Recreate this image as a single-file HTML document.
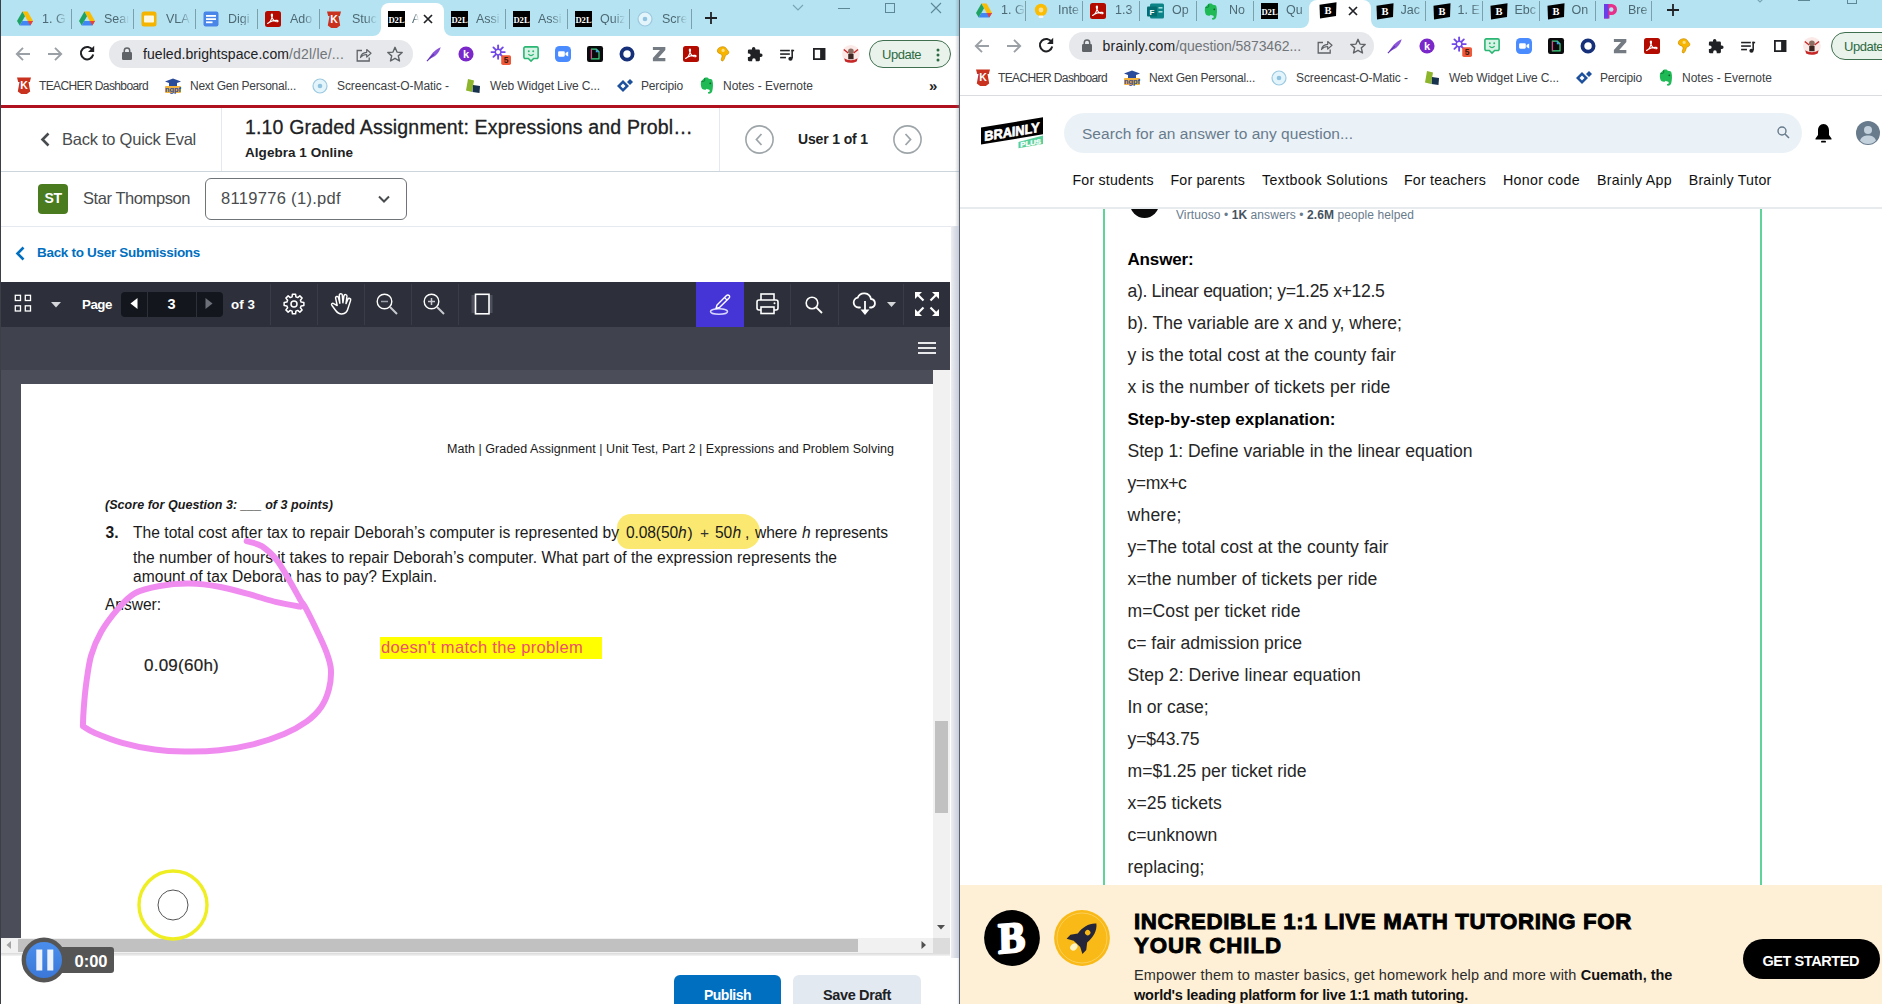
<!DOCTYPE html>
<html><head><meta charset="utf-8"><title>screen</title>
<style>
*{box-sizing:border-box;margin:0;padding:0}
html,body{width:1882px;height:1004px;overflow:hidden;background:#fff;font-family:"Liberation Sans",sans-serif;color:#202124}
.a{position:absolute}
.t{position:absolute;white-space:nowrap;line-height:1}
#L{position:absolute;left:0;top:0;width:960px;height:1004px;overflow:hidden;background:#fff}
#R{position:absolute;left:960px;top:0;width:922px;height:1004px;overflow:hidden;background:#fff}
svg{position:absolute;overflow:visible}
</style></head><body>
<div id="L">
<div class="a" style="left:0px;top:0px;width:960px;height:36px;background:#b5e3f2;"></div><svg style="left:17px;top:11px;" width="16" height="15" viewBox="0 0 16 15"><polygon points="5.4,0.5 10.6,0.5 16,10 10.8,10" fill="#fbbc04"/><polygon points="5.4,0.5 0,10 2.7,14.5 8,5.2" fill="#1ea362"/><polygon points="2.7,14.5 13.3,14.5 16,10 5.3,10" fill="#4285f4"/><polygon points="10.8,10 16,10 13.3,14.5" fill="#ea4335"/></svg><span class="t" style="left:42px;top:12.9px;font-size:12.5px;color:#4d6973;width:25px;overflow:hidden;-webkit-mask-image:linear-gradient(90deg,#000 55%,transparent 100%);">1. G</span><svg style="left:79px;top:11px;" width="16" height="15" viewBox="0 0 16 15"><polygon points="5.4,0.5 10.6,0.5 16,10 10.8,10" fill="#fbbc04"/><polygon points="5.4,0.5 0,10 2.7,14.5 8,5.2" fill="#1ea362"/><polygon points="2.7,14.5 13.3,14.5 16,10 5.3,10" fill="#4285f4"/><polygon points="10.8,10 16,10 13.3,14.5" fill="#ea4335"/></svg><span class="t" style="left:104px;top:12.9px;font-size:12.5px;color:#4d6973;width:25px;overflow:hidden;-webkit-mask-image:linear-gradient(90deg,#000 55%,transparent 100%);">Sear</span><svg style="left:141px;top:11px;" width="16" height="16" viewBox="0 0 16 16"><rect x="0.5" y="0.5" width="15" height="15" rx="2.5" fill="#f4b400"/><rect x="3" y="4.5" width="10" height="7" rx="0.8" fill="#fff8e1"/></svg><span class="t" style="left:166px;top:12.9px;font-size:12.5px;color:#4d6973;width:25px;overflow:hidden;-webkit-mask-image:linear-gradient(90deg,#000 55%,transparent 100%);">VLA</span><svg style="left:203px;top:11px;" width="16" height="16" viewBox="0 0 16 16"><rect x="0.5" y="0.5" width="15" height="15" rx="2.2" fill="#4a86e8"/><rect x="3" y="4" width="10" height="1.8" fill="#fff"/><rect x="3" y="7.2" width="10" height="1.8" fill="#fff"/><rect x="3" y="10.4" width="6.5" height="1.8" fill="#fff"/></svg><span class="t" style="left:228px;top:12.9px;font-size:12.5px;color:#4d6973;width:25px;overflow:hidden;-webkit-mask-image:linear-gradient(90deg,#000 55%,transparent 100%);">Digi</span><svg style="left:265px;top:11px;" width="16" height="16" viewBox="0 0 16 16"><rect x="0" y="0" width="16" height="16" rx="2.5" fill="#b30b00"/><path d="M3 12.2c1.6-.6 3.3-3.6 4.2-6.4.5-1.6.4-2.8-.3-2.8-.8 0-.8 1.6.1 3.4 1.2 2.5 3.6 4.3 5.2 4.3 1.2 0 1.2-1.2-.3-1.3-2.3-.1-6 .9-8.2 2.2-1.3.8-1.4 1.1-.7.6z" fill="none" stroke="#fff" stroke-width="1.1"/></svg><span class="t" style="left:290px;top:12.9px;font-size:12.5px;color:#4d6973;width:25px;overflow:hidden;-webkit-mask-image:linear-gradient(90deg,#000 55%,transparent 100%);">Ado</span><svg style="left:327px;top:11px;" width="14" height="17" viewBox="0 0 14 17"><polygon points="0,0.500 14,0.500 12.800,5 11.500,5 13.200,14.500 9.800,17 4.200,17 0.800,14.500 2.500,5 1.200,5" fill="#c8321f"/><text x="7" y="12.3" font-size="10.5" font-weight="700" fill="#fff" text-anchor="middle" font-family="Liberation Sans,sans-serif">K</text></svg><span class="t" style="left:352px;top:12.9px;font-size:12.5px;color:#4d6973;width:25px;overflow:hidden;-webkit-mask-image:linear-gradient(90deg,#000 55%,transparent 100%);">Stuc</span><svg style="left:451px;top:11px;" width="17" height="16" viewBox="0 0 17 16"><rect width="17" height="16" fill="#000"/><text x="8.5" y="11.6" font-size="8.6" font-weight="700" fill="#fff" text-anchor="middle" font-family="Liberation Serif,serif">D2L</text></svg><span class="t" style="left:476px;top:12.9px;font-size:12.5px;color:#4d6973;width:25px;overflow:hidden;-webkit-mask-image:linear-gradient(90deg,#000 55%,transparent 100%);">Assi</span><svg style="left:513px;top:11px;" width="17" height="16" viewBox="0 0 17 16"><rect width="17" height="16" fill="#000"/><text x="8.5" y="11.6" font-size="8.6" font-weight="700" fill="#fff" text-anchor="middle" font-family="Liberation Serif,serif">D2L</text></svg><span class="t" style="left:538px;top:12.9px;font-size:12.5px;color:#4d6973;width:25px;overflow:hidden;-webkit-mask-image:linear-gradient(90deg,#000 55%,transparent 100%);">Assi</span><svg style="left:575px;top:11px;" width="17" height="16" viewBox="0 0 17 16"><rect width="17" height="16" fill="#000"/><text x="8.5" y="11.6" font-size="8.6" font-weight="700" fill="#fff" text-anchor="middle" font-family="Liberation Serif,serif">D2L</text></svg><span class="t" style="left:600px;top:12.9px;font-size:12.5px;color:#4d6973;width:25px;overflow:hidden;-webkit-mask-image:linear-gradient(90deg,#000 55%,transparent 100%);">Quiz</span><svg style="left:637px;top:11px;" width="16" height="16" viewBox="0 0 16 16"><circle cx="8" cy="8" r="7" fill="#e3f4fb" stroke="#9cc9e0" stroke-width="1.2"/><circle cx="8" cy="8" r="2.3" fill="#8fc3df"/></svg><span class="t" style="left:662px;top:12.9px;font-size:12.5px;color:#4d6973;width:25px;overflow:hidden;-webkit-mask-image:linear-gradient(90deg,#000 55%,transparent 100%);">Scre</span><div class="a" style="left:71px;top:9px;width:1px;height:20px;background:#7aa0ac;"></div><div class="a" style="left:133px;top:9px;width:1px;height:20px;background:#7aa0ac;"></div><div class="a" style="left:195px;top:9px;width:1px;height:20px;background:#7aa0ac;"></div><div class="a" style="left:257px;top:9px;width:1px;height:20px;background:#7aa0ac;"></div><div class="a" style="left:319px;top:9px;width:1px;height:20px;background:#7aa0ac;"></div><div class="a" style="left:505px;top:9px;width:1px;height:20px;background:#7aa0ac;"></div><div class="a" style="left:567px;top:9px;width:1px;height:20px;background:#7aa0ac;"></div><div class="a" style="left:629px;top:9px;width:1px;height:20px;background:#7aa0ac;"></div><div class="a" style="left:691px;top:9px;width:1px;height:20px;background:#7aa0ac;"></div><div class="a" style="left:381px;top:2.500px;width:63px;height:34px;background:#fff;border-radius:8px 8px 0 0"></div><svg style="left:373px;top:28px;" width="8" height="8" viewBox="0 0 8 8"><path d="M0 8A8 8 0 0 0 8 0V8z" fill="#fff"/></svg><svg style="left:444px;top:28px;" width="8" height="8" viewBox="0 0 8 8"><path d="M8 8A8 8 0 0 1 0 0V8z" fill="#fff"/></svg><svg style="left:388px;top:11px;" width="17" height="16" viewBox="0 0 17 16"><rect width="17" height="16" fill="#000"/><text x="8.5" y="11.6" font-size="8.6" font-weight="700" fill="#fff" text-anchor="middle" font-family="Liberation Serif,serif">D2L</text></svg><span class="t" style="left:412px;top:12.9px;font-size:12.5px;color:#4d6973;width:7px;overflow:hidden;-webkit-mask-image:linear-gradient(90deg,#000 20%,transparent 100%);">A</span><svg style="left:423px;top:14px;" width="10" height="10" viewBox="0 0 10 10"><path d="M1 1l8 8M9 1l-8 8" stroke="#202124" stroke-width="1.700"/></svg><svg style="left:704px;top:11px;" width="14" height="14" viewBox="0 0 14 14"><path d="M7 1v12M1 7h12" stroke="#202124" stroke-width="1.800"/></svg><svg style="left:792px;top:4px;" width="12" height="8" viewBox="0 0 12 8"><path d="M1 1l5 5 5-5" fill="none" stroke="#7aa5b3" stroke-width="1.200"/></svg><div class="a" style="left:838px;top:8px;width:12px;height:1px;background:#5d8795;"></div><div class="a" style="left:885px;top:3px;width:10px;height:10px;border:1px solid #5d8795"></div><svg style="left:930px;top:2px;" width="12" height="12" viewBox="0 0 12 12"><path d="M1 1l10 10M11 1 1 11" stroke="#5d8795" stroke-width="1.100"/></svg><div class="a" style="left:0px;top:36px;width:960px;height:68px;background:#fff;"></div><svg style="left:15px;top:46px;" width="16" height="16" viewBox="0 0 16 16"><path d="M15 8H2M8 1.800 1.800 8 8 14.200" fill="none" stroke="#9aa0a6" stroke-width="1.900"/></svg><svg style="left:47px;top:46px;" width="16" height="16" viewBox="0 0 16 16"><path d="M1 8h13M8 1.800 14.200 8 8 14.200" fill="none" stroke="#9aa0a6" stroke-width="1.900"/></svg><svg style="left:79px;top:45px;" width="16" height="16" viewBox="0 0 16 16"><path d="M13.600 5.200A6.200 6.200 0 1 0 14.200 9.500" fill="none" stroke="#202124" stroke-width="2"/><polygon points="15.200,0.800 15.200,7 9,7" fill="#202124"/></svg><div class="a" style="left:109px;top:40px;width:304px;height:28px;border-radius:14px;background:#e7e8eb"></div><svg style="left:122px;top:47px;" width="10" height="13" viewBox="0 0 10 13"><rect x="0" y="5" width="10" height="8" rx="1.200" fill="#5f6368"/><path d="M2.300 5.500V3.600a2.700 2.700 0 0 1 5.400 0V5.500" fill="none" stroke="#5f6368" stroke-width="1.500"/></svg><span class="t" style="left:143px;top:47.1px;font-size:14px;color:#202124;letter-spacing:0.056px;">fueled.brightspace.com</span><span class="t" style="left:289px;top:47.1px;font-size:14px;color:#70757a;letter-spacing:0.189px;">/d2l/le/...</span><svg style="left:356px;top:47px;" width="16" height="15" viewBox="0 0 16 15"><path d="M6 3.500H1.200V14h12V10.500" fill="none" stroke="#5f6368" stroke-width="1.300"/><path d="M4.500 10.500c.6-3.300 2.700-5 6.200-5.200V2.500L15 6.300l-4.300 3.800V7.500c-2.700 0-4.600.9-6.200 3z" fill="none" stroke="#5f6368" stroke-width="1.200" stroke-linejoin="round"/></svg><svg style="left:387px;top:46px;" width="16" height="16" viewBox="0 0 16 16"><polygon points="8,1.300 10,6.100 15.200,6.500 11.300,9.900 12.500,15 8,12.300 3.500,15 4.700,9.900 0.800,6.500 6,6.100" fill="none" stroke="#5f6368" stroke-width="1.400" stroke-linejoin="round"/></svg><svg style="left:425.99px;top:45.99px;" width="16.02" height="16.02" viewBox="0 0 18 18"><path d="M1.500 16.500C5 10 10 4 16.500 1.500 15 8 10 12.500 4 14.500z" fill="#8a55d8"/><path d="M1 17 9 9" stroke="#5b2fb0" stroke-width="1.200"/></svg><svg style="left:457.99px;top:45.99px;" width="16.02" height="16.02" viewBox="0 0 18 18"><circle cx="9" cy="9" r="8.500" fill="#7a28c9"/><text x="9" y="13.300" font-size="12.500" font-weight="700" fill="#fff" text-anchor="middle" font-family="Liberation Sans,sans-serif">k</text></svg><svg style="left:491.32px;top:45.32px;" width="21.36" height="21.36" viewBox="0 0 24 24"><line x1="8" y1="8" x2="15.50" y2="8.00" stroke="#7048e8" stroke-width="2.100" stroke-linecap="round"/><line x1="8" y1="8" x2="13.30" y2="13.30" stroke="#7048e8" stroke-width="2.100" stroke-linecap="round"/><line x1="8" y1="8" x2="8.00" y2="15.50" stroke="#7048e8" stroke-width="2.100" stroke-linecap="round"/><line x1="8" y1="8" x2="2.70" y2="13.30" stroke="#7048e8" stroke-width="2.100" stroke-linecap="round"/><line x1="8" y1="8" x2="0.50" y2="8.00" stroke="#7048e8" stroke-width="2.100" stroke-linecap="round"/><line x1="8" y1="8" x2="2.70" y2="2.70" stroke="#7048e8" stroke-width="2.100" stroke-linecap="round"/><line x1="8" y1="8" x2="8.00" y2="0.50" stroke="#7048e8" stroke-width="2.100" stroke-linecap="round"/><line x1="8" y1="8" x2="13.30" y2="2.70" stroke="#7048e8" stroke-width="2.100" stroke-linecap="round"/><circle cx="8" cy="8" r="3.200" fill="#fff" stroke="#7048e8" stroke-width="1.600"/><rect x="11.500" y="11.500" width="11" height="11" rx="2" fill="#f0583a"/><text x="17" y="20.600" font-size="9.500" font-weight="700" fill="#3a1a10" text-anchor="middle" font-family="Liberation Sans,sans-serif">5</text></svg><svg style="left:522.99px;top:45.99px;" width="16.02" height="16.02" viewBox="0 0 18 18"><path d="M2.500 1h13a1.500 1.500 0 0 1 1.500 1.500v10a1.500 1.500 0 0 1-1.500 1.500H12l-3 3-3-3H2.500A1.500 1.500 0 0 1 1 12.500v-10A1.500 1.500 0 0 1 2.500 1z" fill="#d7f3e6" stroke="#2bb673" stroke-width="1.800"/><circle cx="6.500" cy="6" r="1.100" fill="#2bb673"/><circle cx="11.500" cy="6" r="1.100" fill="#2bb673"/><path d="M6 9.200c1.700 1.700 4.300 1.700 6 0" fill="none" stroke="#2bb673" stroke-width="1.300"/></svg><svg style="left:554.99px;top:45.99px;" width="16.02" height="16.02" viewBox="0 0 18 18"><rect width="18" height="18" rx="5" fill="#4a8cff"/><rect x="3.500" y="6" width="7.500" height="6" rx="1.300" fill="#fff"/><polygon points="11.800,8 14.800,6.200 14.800,11.800 11.800,10" fill="#fff"/></svg><svg style="left:586.99px;top:45.99px;" width="16.02" height="16.02" viewBox="0 0 18 18"><rect width="18" height="18" rx="2.500" fill="#0b0b0d"/><path d="M5 3.500h5.500L13.500 6.500V14.500H5z" fill="none" stroke="#3ddc84" stroke-width="1.300"/><path d="M5 14.500V3.500" stroke="#e83e8c" stroke-width="1.300"/><path d="M10.500 3.500v3h3" fill="none" stroke="#4aa3ff" stroke-width="1.200"/></svg><svg style="left:618.99px;top:45.99px;" width="16.02" height="16.02" viewBox="0 0 18 18"><circle cx="9" cy="9" r="6.300" fill="none" stroke="#16307a" stroke-width="4.200"/></svg><svg style="left:651.88px;top:45.99px;" width="14.24" height="16.02" viewBox="0 0 16 18"><polygon points="1,1 15,1 15,4.500 7,13.500 15,13.500 15,17 1,17 1,13.500 9,4.500 1,4.500" fill="#757b82"/></svg><svg style="left:682.99px;top:45.99px;" width="16.02" height="16.02" viewBox="0 0 16 16"><rect x="0" y="0" width="16" height="16" rx="2.5" fill="#b30b00"/><path d="M3 12.2c1.6-.6 3.3-3.6 4.2-6.4.5-1.6.4-2.8-.3-2.8-.8 0-.8 1.6.1 3.4 1.2 2.5 3.6 4.3 5.2 4.3 1.2 0 1.2-1.2-.3-1.3-2.3-.1-6 .9-8.2 2.2-1.3.8-1.4 1.1-.7.6z" fill="none" stroke="#fff" stroke-width="1.1"/></svg><svg style="left:715.88px;top:45.99px;" width="14.24" height="16.02" viewBox="0 0 16 18"><path d="M6 1c3-1 6 1 6.500 3.500 1.500.5 2.500 2.500 1.500 4-1 1.500-3 1.200-3.500 2.500-.5 1.500-1 4-2.500 5.500-1.500 1-2.500-.5-2-2 .5-2 1.500-3 .5-4.500C5 8 1.500 8.500 1.500 5.500 1.500 3 3.500 1.500 6 1z" fill="#f7b500" stroke="#c98a00" stroke-width=".8"/><circle cx="8" cy="5" r="1.800" fill="#fbe08a"/></svg><svg style="left:746.99px;top:45.99px;" width="16.02" height="16.02" viewBox="0 0 18 18"><path d="M7.500 1a1.900 1.900 0 0 1 1.900 1.900V4h3.800A1.300 1.300 0 0 1 14.500 5.300V8.500h1.100a1.900 1.900 0 0 1 0 3.800H14.500v3.400a1.300 1.300 0 0 1-1.300 1.300H9.800v-1.100a2 2 0 0 0-4 0V17H2.300A1.300 1.300 0 0 1 1 15.700V12.300h1.100a2 2 0 0 0 0-4H1V5.300A1.300 1.300 0 0 1 2.300 4h3.300V2.900A1.900 1.900 0 0 1 7.500 1z" fill="#202124"/></svg><svg style="left:779.88px;top:48.77px;" width="14.24" height="12.46" viewBox="0 0 18 16"><rect x="0" y="1" width="12.500" height="2" fill="#202124"/><rect x="0" y="5.500" width="12.500" height="2" fill="#202124"/><rect x="0" y="10" width="7.500" height="2" fill="#202124"/><rect x="14.500" y="1" width="2" height="11" fill="#202124"/><rect x="14.500" y="1" width="3.500" height="2" fill="#202124"/><circle cx="13.300" cy="12.500" r="2.700" fill="#202124"/></svg><svg style="left:812.77px;top:47.77px;" width="12.46" height="12.46" viewBox="0 0 14 14"><rect x="1" y="1" width="12" height="11.500" fill="#fff" stroke="#202124" stroke-width="2"/><rect x="8" y="1" width="5" height="11.500" fill="#202124"/></svg><svg style="left:842.10px;top:45.10px;" width="17.80" height="17.80" viewBox="0 0 20 20"><circle cx="10" cy="10" r="10" fill="#fbe9e7"/><path d="M2 5 7 9M18 5 13 9" stroke="#c62828" stroke-width="1.600"/><circle cx="10" cy="7" r="3.200" fill="#8d6e63"/><rect x="7" y="10" width="6" height="6" fill="#3e2723"/><path d="M2.500 15c4 3 11 3 15 0l-1 3.500c-4 2-9 2-13 0z" fill="#c62828"/></svg><div class="a" style="left:869px;top:40px;width:82px;height:28px;border:1.300px solid #3f6f4e;border-radius:14.0px;background:#e9f3eb"></div><span class="t" style="left:882px;top:48.0px;font-size:13px;color:#2d6a43;letter-spacing:-0.487px;">Update</span><svg style="left:936px;top:48px;" width="4" height="14" viewBox="0 0 4 14"><circle cx="2" cy="2" r="1.500" fill="#2d6a43"/><circle cx="2" cy="7" r="1.500" fill="#2d6a43"/><circle cx="2" cy="12" r="1.500" fill="#2d6a43"/></svg><svg style="left:17px;top:77.0px;" width="14" height="17" viewBox="0 0 14 17"><polygon points="0,0.500 14,0.500 12.800,5 11.500,5 13.200,14.500 9.800,17 4.200,17 0.800,14.500 2.500,5 1.200,5" fill="#c8321f"/><text x="7" y="12.3" font-size="10.5" font-weight="700" fill="#fff" text-anchor="middle" font-family="Liberation Sans,sans-serif">K</text></svg><span class="t" style="left:39px;top:79.8px;font-size:12px;color:#3c4043;letter-spacing:-0.611px;">TEACHER Dashboard</span><svg style="left:164px;top:77.5px;" width="18" height="16" viewBox="0 0 18 16"><rect x="1" y="8" width="16" height="7" rx="1" fill="#f3b33d"/><text x="9" y="14" font-size="7.500" font-weight="700" fill="#2b4c9b" text-anchor="middle" font-family="Liberation Sans,sans-serif">ngpf</text><polygon points="9,0.500 17,3.500 9,6.500 1,3.500" fill="#2b4c9b"/><rect x="5" y="5" width="8" height="3" fill="#2b4c9b"/></svg><span class="t" style="left:190px;top:79.8px;font-size:12px;color:#3c4043;letter-spacing:-0.270px;">Next Gen Personal...</span><svg style="left:312px;top:77.5px;" width="16" height="16" viewBox="0 0 16 16"><circle cx="8" cy="8" r="7" fill="#e3f4fb" stroke="#9cc9e0" stroke-width="1.2"/><circle cx="8" cy="8" r="2.3" fill="#8fc3df"/></svg><span class="t" style="left:337px;top:79.8px;font-size:12px;color:#3c4043;letter-spacing:-0.068px;">Screencast-O-Matic -</span><svg style="left:465px;top:78.5px;" width="18" height="15" viewBox="0 0 18 15"><polygon points="3,0 9,1.500 7,13 1,11.500" fill="#8cb52b"/><polygon points="8,6 15,7 14.500,14 7.500,13" fill="#17324d"/></svg><span class="t" style="left:490px;top:79.8px;font-size:12px;color:#3c4043;letter-spacing:-0.125px;">Web Widget Live C...</span><svg style="left:616px;top:78.5px;" width="18" height="14" viewBox="0 0 18 14"><polygon points="7,1 13,7 7,13 1,7" fill="#1c4f9c"/><polygon points="7,4.500 9.500,7 7,9.500 4.500,7" fill="#fff"/><polygon points="14,0 17,3 14,6 11,3" fill="#1c4f9c"/></svg><span class="t" style="left:641px;top:79.8px;font-size:12px;color:#3c4043;letter-spacing:-0.170px;">Percipio</span><svg style="left:700px;top:76.5px;" width="15" height="17" viewBox="0 0 15 17"><path d="M4.6 0.8 1.2 4.3c-.6 1.7-.5 4.6.4 6.8.5 1.2 1.6 1.6 3.2 1.7 1 .1 1.5-.3 1.6-1.1.7.5 1.6.6 2.3.7.9.1 1.1.6 1 1.6-.1.9-.6 1.1-1.7 1l.1 1.6c2.3.3 3.5-.5 4.1-2.4.8-2.8 1.2-7.5.2-10.7-.3-1-1.2-1.5-3.600-1.700C8 0.700 7.200 0.300 4.600 0.800z" fill="#1fb956"/><path d="M4.700 1.200v2.100c0 .7-.4 1.100-1.100 1.100H1.500" fill="none" stroke="#0d7a35" stroke-width=".9"/><circle cx="10.3" cy="6.300" r=".9" fill="#0d5e2a"/></svg><span class="t" style="left:723px;top:79.8px;font-size:12px;color:#3c4043;">Notes - Evernote</span><span class="t" style="left:929px;top:78.3px;font-size:15px;color:#202124;font-weight:700;">»</span><div class="a" style="left:0px;top:104.6px;width:960px;height:4.3px;background:#b0111e;"></div><div class="a" style="left:0px;top:108px;width:959px;height:63px;background:#fff;"></div><div class="a" style="left:221px;top:108px;width:1px;height:63px;background:#e3e9f1;"></div><div class="a" style="left:719px;top:108px;width:1px;height:63px;background:#e3e9f1;"></div><div class="a" style="left:0px;top:171px;width:959px;height:1px;background:#cdd5dc;"></div><svg style="left:40px;top:132px;" width="10" height="15" viewBox="0 0 10 15"><path d="M8.500 1.500 2.500 7.500l6 6" fill="none" stroke="#494c4e" stroke-width="2.600"/></svg><span class="t" style="left:62px;top:131.4px;font-size:16.5px;color:#494c4e;letter-spacing:-0.249px;">Back to Quick Eval</span><span class="t" style="left:245px;top:118.1px;font-size:19.5px;color:#202122;-webkit-text-stroke:0.300px #202122;letter-spacing:0.172px;">1.10 Graded Assignment: Expressions and Probl…</span><span class="t" style="left:245px;top:146.1px;font-size:13.5px;color:#202122;font-weight:700;letter-spacing:0.045px;">Algebra 1 Online</span><svg style="left:744.5px;top:124.8px;" width="29" height="29" viewBox="0 0 29 29"><circle cx="14.500" cy="14.500" r="13.600" fill="#fff" stroke="#9ea5a9" stroke-width="1.600"/><path d="M16.500 9 11.500 14.500l5 5.500" fill="none" stroke="#9ea5a9" stroke-width="1.800"/></svg><svg style="left:892.5px;top:124.8px;" width="29" height="29" viewBox="0 0 29 29"><circle cx="14.500" cy="14.500" r="13.600" fill="#fff" stroke="#9ea5a9" stroke-width="1.600"/><path d="M12.500 9l5 5.500-5 5.500" fill="none" stroke="#9ea5a9" stroke-width="1.800"/></svg><span class="t" style="left:798px;top:131.9px;font-size:14px;color:#202122;font-weight:700;letter-spacing:-0.145px;">User 1 of 1</span><div class="a" style="left:38px;top:184px;width:30px;height:30px;background:#4a7c1f;border-radius:4px"></div><span class="t" style="left:44.5px;top:191.4px;font-size:14px;color:#fff;font-weight:700;letter-spacing:-0.445px;">ST</span><span class="t" style="left:83px;top:190.0px;font-size:16.5px;color:#494c4e;letter-spacing:-0.424px;">Star Thompson</span><div class="a" style="left:205px;top:178px;width:202px;height:41.5px;background:#fff;border:1.300px solid #6e7477;border-radius:6px"></div><span class="t" style="left:221px;top:190.0px;font-size:16.5px;color:#494c4e;letter-spacing:0.314px;">8119776 (1).pdf</span><svg style="left:377px;top:194px;" width="14" height="10" viewBox="0 0 14 10"><path d="M2 2.500 7 7.500l5-5" fill="none" stroke="#494c4e" stroke-width="2"/></svg><div class="a" style="left:0px;top:226px;width:959px;height:1px;background:#e6eaf0;"></div><svg style="left:15px;top:246px;" width="11" height="15" viewBox="0 0 11 15"><path d="M8.500 1.500 2.500 7.500l6 6" fill="none" stroke="#006fbf" stroke-width="2.600"/></svg><span class="t" style="left:37px;top:246.2px;font-size:13.5px;color:#006fbf;font-weight:700;letter-spacing:-0.305px;">Back to User Submissions</span><div class="a" style="left:0px;top:282px;width:950px;height:45px;background:#2d303b;"></div><div class="a" style="left:0px;top:327px;width:950px;height:43px;background:#40434e;"></div><svg style="left:14px;top:294px;" width="18" height="19" viewBox="0 0 18 19"><rect x="1.3" y="1.3" width="5.200" height="5.200" fill="none" stroke="#fff" stroke-width="1.300"/><rect x="1.3" y="11.8" width="5.200" height="5.200" fill="none" stroke="#fff" stroke-width="1.300"/><rect x="11.3" y="1.3" width="5.200" height="5.200" fill="none" stroke="#fff" stroke-width="1.300"/><rect x="11.3" y="11.8" width="5.200" height="5.200" fill="none" stroke="#fff" stroke-width="1.300"/></svg><svg style="left:51px;top:302px;" width="10" height="6" viewBox="0 0 10 6"><polygon points="0,0 10,0 5,5.500" fill="#d5d6da"/></svg><span class="t" style="left:82px;top:298.2px;font-size:13.3px;color:#fff;font-weight:700;letter-spacing:-0.449px;">Page</span><div class="a" style="left:121px;top:291.5px;width:102px;height:25.5px;background:#14161d;border-radius:4px"></div><div class="a" style="left:147px;top:291.5px;width:1px;height:25.5px;background:#2d303b;"></div><div class="a" style="left:196px;top:291.5px;width:1px;height:25.5px;background:#2d303b;"></div><svg style="left:130px;top:298px;" width="8" height="12" viewBox="0 0 8 12"><polygon points="7.500,0 7.500,11 0.500,5.500" fill="#fff"/></svg><svg style="left:205px;top:298px;" width="8" height="12" viewBox="0 0 8 12"><polygon points="0.500,0 0.500,11 7.500,5.500" fill="#6d7078"/></svg><span class="t" style="left:167.5px;top:297.2px;font-size:14.5px;color:#fff;font-weight:700;">3</span><span class="t" style="left:231px;top:298.2px;font-size:13.3px;color:#fff;font-weight:700;letter-spacing:0.090px;">of 3</span><div class="a" style="left:270px;top:284px;width:1px;height:41px;background:#3a3d48;"></div><div class="a" style="left:317px;top:284px;width:1px;height:41px;background:#3a3d48;"></div><div class="a" style="left:364px;top:284px;width:1px;height:41px;background:#3a3d48;"></div><div class="a" style="left:411px;top:284px;width:1px;height:41px;background:#3a3d48;"></div><div class="a" style="left:458px;top:284px;width:1px;height:41px;background:#3a3d48;"></div><div class="a" style="left:790px;top:284px;width:1px;height:41px;background:#3a3d48;"></div><div class="a" style="left:838px;top:284px;width:1px;height:41px;background:#3a3d48;"></div><div class="a" style="left:903px;top:284px;width:1px;height:41px;background:#3a3d48;"></div><svg style="left:283px;top:293px;" width="22" height="22" viewBox="0 0 22 22"><g transform="translate(11,11)"><path d="M-1.90 -7.15 L-1.59 -9.87 L1.59 -9.87 L1.90 -7.15 L3.71 -6.40 L5.85 -8.11 L8.11 -5.85 L6.40 -3.71 L7.15 -1.90 L9.87 -1.59 L9.87 1.59 L7.15 1.90 L6.40 3.71 L8.11 5.85 L5.85 8.11 L3.71 6.40 L1.90 7.15 L1.59 9.87 L-1.59 9.87 L-1.90 7.15 L-3.71 6.40 L-5.85 8.11 L-8.11 5.85 L-6.40 3.71 L-7.15 1.90 L-9.87 1.59 L-9.87 -1.59 L-7.15 -1.90 L-6.40 -3.71 L-8.11 -5.85 L-5.85 -8.11 L-3.71 -6.40Z" fill="none" stroke="#fff" stroke-width="1.500" stroke-linejoin="round"/><circle r="3" fill="none" stroke="#fff" stroke-width="1.500"/></g></svg><svg style="left:330px;top:292px;" width="23" height="24" viewBox="0 0 23 24"><path d="M7.200 13.500 5.600 6.200a1.450 1.450 0 0 1 2.850-.6L9.800 11.200 9.300 3.300a1.500 1.500 0 0 1 3-.2L12.900 10.800 14 3.700a1.500 1.500 0 0 1 2.950.45L16 11.600 17.900 7.300a1.450 1.450 0 0 1 2.700 1.100L18.300 15.500C17.400 19.500 15.500 22 11.800 22 8.700 22 7 20.500 5.300 18L1.800 13.200c-.9-1.300.7-2.700 1.900-1.600z" fill="none" stroke="#fff" stroke-width="1.450" stroke-linejoin="round" stroke-linecap="round"/></svg><svg style="left:376px;top:293px;" width="22" height="22" viewBox="0 0 22 22"><circle cx="8.500" cy="8.500" r="7.300" fill="none" stroke="#fff" stroke-width="1.400"/><path d="M14 14l7 7" stroke="#c9cacf" stroke-width="2"/><path d="M5 8.500h7" stroke="#9da0a8" stroke-width="1.500"/></svg><svg style="left:423px;top:293px;" width="22" height="22" viewBox="0 0 22 22"><circle cx="8.500" cy="8.500" r="7.300" fill="none" stroke="#fff" stroke-width="1.400"/><path d="M14 14l7 7" stroke="#c9cacf" stroke-width="2"/><path d="M5 8.500h7M8.500 5v7" stroke="#c9cacf" stroke-width="1.500"/></svg><svg style="left:470px;top:293px;" width="24" height="22" viewBox="0 0 24 22"><rect x="1.500" y="2" width="21" height="18" fill="#4d505c"/><rect x="5.500" y="1.300" width="13.500" height="19.500" fill="#2d303b" stroke="#fff" stroke-width="1.600"/></svg><div class="a" style="left:696px;top:282px;width:48px;height:45px;background:#4535d6;"></div><svg style="left:708px;top:294px;" width="24" height="22" viewBox="0 0 24 22"><ellipse cx="11" cy="17.500" rx="8.500" ry="2.800" fill="none" stroke="#d9d6ff" stroke-width="1.500"/><path d="M8 14.500l1-3.500L18.500 1.500a1.800 1.800 0 0 1 2.600 2.600L11.500 13.500z" fill="#4535d6" stroke="#fff" stroke-width="1.400" stroke-linejoin="round"/><path d="M16.500 3.500l2.600 2.600" stroke="#fff" stroke-width="1.200"/></svg><svg style="left:756px;top:293px;" width="23" height="22" viewBox="0 0 23 22"><rect x="5" y="1" width="13" height="7" fill="none" stroke="#fff" stroke-width="1.600"/><rect x="1" y="7" width="21" height="10" rx="2" fill="#2d303b" stroke="#fff" stroke-width="1.600"/><rect x="5" y="14" width="13" height="6.500" fill="#2d303b" stroke="#fff" stroke-width="1.600"/><circle cx="18.500" cy="10.300" r="1" fill="#fff"/></svg><svg style="left:805px;top:296px;" width="18" height="18" viewBox="0 0 18 18"><circle cx="7" cy="7" r="5.800" fill="none" stroke="#fff" stroke-width="1.600"/><path d="M11.300 11.300 17 17" stroke="#fff" stroke-width="1.800"/></svg><svg style="left:852px;top:292px;" width="26" height="24" viewBox="0 0 26 24"><path d="M8 15.500H6.500a5 5 0 0 1-.8-9.900 7 7 0 0 1 13.300 1.400 4.300 4.300 0 0 1 .5 8.500H18" fill="none" stroke="#fff" stroke-width="1.800" stroke-linecap="round"/><path d="M13 9v12" stroke="#fff" stroke-width="1.800"/><polygon points="8.500,17.500 17.500,17.500 13,23" fill="#fff"/></svg><svg style="left:887px;top:302px;" width="10" height="6" viewBox="0 0 10 6"><polygon points="0,0 9,0 4.500,5" fill="#d5d6da"/></svg><svg style="left:915px;top:292px;" width="24" height="24" viewBox="0 0 24 24"><g transform="translate(12,12) scale(1,1)"><polygon points="5,12 12,12 12,5" fill="#fff"/><path d="M3.500 3.500 10 10" stroke="#fff" stroke-width="2.200"/></g><g transform="translate(12,12) scale(-1,1)"><polygon points="5,12 12,12 12,5" fill="#fff"/><path d="M3.500 3.500 10 10" stroke="#fff" stroke-width="2.200"/></g><g transform="translate(12,12) scale(1,-1)"><polygon points="5,12 12,12 12,5" fill="#fff"/><path d="M3.500 3.500 10 10" stroke="#fff" stroke-width="2.200"/></g><g transform="translate(12,12) scale(-1,-1)"><polygon points="5,12 12,12 12,5" fill="#fff"/><path d="M3.500 3.500 10 10" stroke="#fff" stroke-width="2.200"/></g></svg><div class="a" style="left:918px;top:342px;width:18px;height:2.2px;background:#e8e8ea;"></div><div class="a" style="left:918px;top:347px;width:18px;height:2.2px;background:#e8e8ea;"></div><div class="a" style="left:918px;top:352px;width:18px;height:2.2px;background:#e8e8ea;"></div><div class="a" style="left:0px;top:370px;width:933px;height:568px;background:#4b4e59;"></div><div class="a" style="left:21px;top:384px;width:912px;height:554px;background:#fff;"></div><div class="a" style="left:933px;top:370px;width:17px;height:568px;background:#f1f1f1;"></div><div class="a" style="left:935px;top:721px;width:13px;height:92px;background:#c1c1c1;"></div><svg style="left:937px;top:925px;" width="9" height="6" viewBox="0 0 9 6"><polygon points="0,0 8,0 4,4.500" fill="#505050"/></svg><div class="a" style="left:0px;top:938px;width:933px;height:15px;background:#f1f1f1;"></div><div class="a" style="left:18px;top:939px;width:840px;height:13px;background:#c1c1c1;"></div><svg style="left:6px;top:941px;" width="6" height="9" viewBox="0 0 6 9"><polygon points="5,0 5,8 0.500,4" fill="#a3a3a3"/></svg><svg style="left:921px;top:941px;" width="6" height="9" viewBox="0 0 6 9"><polygon points="0.500,0 0.500,8 5,4" fill="#505050"/></svg><div class="a" style="left:933px;top:938px;width:17px;height:15px;background:#dcdcdc;"></div><div class="a" style="left:0px;top:953px;width:950px;height:3px;background:linear-gradient(#d8d8d8,#f4f4f4)"></div><div class="a" style="left:952px;top:585px;width:1px;height:18px;background:#6b6b6b;"></div><div class="a" style="left:955px;top:585px;width:1px;height:18px;background:#6b6b6b;"></div><span class="t" style="left:447px;top:442.9px;font-size:12.5px;color:#1a1a1a;letter-spacing:0.042px;">Math | Graded Assignment | Unit Test, Part 2 | Expressions and Problem Solving</span><span class="t" style="left:105px;top:499.2px;font-size:12.5px;color:#1a1a1a;font-weight:700;font-style:italic;letter-spacing:0.040px;">(Score for Question 3: ___ of 3 points)</span><span class="t" style="left:105.5px;top:524.8px;font-size:15.6px;color:#1a1a1a;font-weight:700;letter-spacing:-0.008px;">3.</span><div class="a" style="left:617px;top:514px;width:143px;height:35px;background:#fbe870;border-radius:14px 18px 16px 12px"></div><span class="t" style="left:133px;top:524.8px;font-size:15.6px;color:#1a1a1a;letter-spacing:0.025px;">The total cost after tax to repair Deborah’s computer is represented by</span><span class="t" style="left:626px;top:524.8px;font-size:15.6px;color:#1a1a1a;letter-spacing:-0.127px;">0.08(50</span><span class="t" style="left:678px;top:524.8px;font-size:15.6px;color:#1a1a1a;font-style:italic;letter-spacing:-0.688px;">h</span><span class="t" style="left:687.5px;top:524.9px;font-size:15.5px;color:#1a1a1a;letter-spacing:-0.172px;">)</span><span class="t" style="left:700px;top:524.9px;font-size:15.5px;color:#333;letter-spacing:0.438px;">+</span><span class="t" style="left:715px;top:524.8px;font-size:15.6px;color:#1a1a1a;letter-spacing:-0.180px;">50</span><span class="t" style="left:732.5px;top:524.8px;font-size:15.6px;color:#1a1a1a;font-style:italic;letter-spacing:-0.688px;">h</span><span class="t" style="left:745px;top:524.8px;font-size:15.6px;color:#1a1a1a;letter-spacing:-0.344px;">,</span><span class="t" style="left:755px;top:524.8px;font-size:15.6px;color:#1a1a1a;letter-spacing:-0.097px;">where</span><span class="t" style="left:802px;top:524.8px;font-size:15.6px;color:#1a1a1a;font-style:italic;letter-spacing:-0.688px;">h</span><span class="t" style="left:815px;top:524.8px;font-size:15.6px;color:#1a1a1a;letter-spacing:-0.069px;">represents</span><span class="t" style="left:133px;top:550.3px;font-size:15.6px;color:#1a1a1a;letter-spacing:0.022px;">the number of hours it takes to repair Deborah’s computer. What part of the expression represents the</span><span class="t" style="left:133px;top:569.1px;font-size:15.6px;color:#1a1a1a;letter-spacing:0.014px;">amount of tax Deborah has to pay? Explain.</span><span class="t" style="left:105px;top:596.8px;font-size:15.6px;color:#1a1a1a;letter-spacing:-0.049px;">Answer:</span><span class="t" style="left:144px;top:656.6px;font-size:17px;color:#222;-webkit-text-stroke:0.200px #222;letter-spacing:0.247px;">0.09(60h)</span><div class="a" style="left:380px;top:637px;width:222px;height:21.5px;background:#ffff00;"></div><span class="t" style="left:381px;top:638.5px;font-size:16.5px;color:#ef4f6b;letter-spacing:0.323px;">doesn&#x27;t match the problem</span><svg style="left:0;top:0" width="960" height="1004" viewBox="0 0 960 1004"><path d="M246.7 541.2 C249.2 542.0 256.7 543.0 261.7 546.1 C266.6 549.3 272.0 554.2 276.6 559.8 C281.2 565.4 285.1 573.1 289.0 579.8 C293.0 586.4 297.6 595.1 300.2 599.7 C302.9 604.2 302.5 602.2 305.2 607.1 C307.9 612.1 312.9 622.1 316.4 629.5 C320.0 637.0 324.0 645.3 326.4 652.0 C328.8 658.6 330.5 663.2 330.9 669.4 C331.3 675.6 330.5 683.1 328.9 689.3 C327.3 695.5 325.1 701.3 321.4 706.7 C317.7 712.1 312.7 717.1 306.5 721.7 C300.2 726.2 292.8 730.4 284.1 734.1 C275.4 737.8 265.0 741.4 254.2 744.1 C243.4 746.8 231.0 749.0 219.3 750.3 C207.7 751.5 195.3 751.7 184.5 751.5 C173.7 751.4 165.0 751.0 154.6 749.5 C144.2 748.1 132.2 745.6 122.2 742.8 C112.3 740.0 101.4 735.6 94.9 732.9 C88.3 730.1 84.9 727.3 82.9 726.1 L82.9 726.1 C83.0 723.3 83.1 716.2 83.7 709.2 C84.2 702.2 84.9 693.2 86.1 684.3 C87.4 675.4 88.6 664.4 91.1 655.7 C93.6 647.0 96.7 639.7 101.1 632.0 C105.4 624.4 111.7 616.1 117.3 609.6 C122.9 603.2 127.6 597.4 134.7 593.4 C141.7 589.5 150.5 587.6 159.6 586.0 C168.7 584.3 179.5 583.4 189.5 583.5 C199.4 583.6 209.4 584.9 219.3 586.7 C229.3 588.5 239.7 591.6 249.2 594.2 C258.8 596.8 268.1 600.1 276.6 602.2 C285.1 604.2 296.3 605.9 300.2 606.6" fill="none" stroke="#f08cf0" stroke-width="6" stroke-linecap="round" stroke-linejoin="round"/></svg><svg style="left:136px;top:868px;" width="74" height="74" viewBox="0 0 74 74"><circle cx="37" cy="37" r="34" fill="none" stroke="#eeee22" stroke-width="3.400"/><circle cx="37" cy="37" r="15" fill="none" stroke="#555" stroke-width="1"/></svg><div class="a" style="left:0px;top:956px;width:950px;height:48px;background:#fff;"></div><div class="a" style="left:674px;top:975px;width:107px;height:40px;background:#006fbf;border-radius:6px"></div><span class="t" style="left:704px;top:988.1px;font-size:14px;color:#fff;font-weight:700;letter-spacing:-0.509px;">Publish</span><div class="a" style="left:793px;top:975px;width:128px;height:40px;background:#e3e9f1;border-radius:6px"></div><span class="t" style="left:823px;top:987.7px;font-size:14.5px;color:#202122;font-weight:700;letter-spacing:-0.373px;">Save Draft</span><div class="a" style="left:44px;top:947px;width:70px;height:26px;background:#555;border-radius:0 3px 3px 0"></div><span class="t" style="left:74.5px;top:952.5px;font-size:16.5px;color:#fff;font-weight:700;letter-spacing:-0.008px;">0:00</span><svg style="left:21px;top:936.6px;" width="46" height="46" viewBox="0 0 46 46"><defs><linearGradient id="pg" x1="0" y1="0" x2="0" y2="1"><stop offset="0" stop-color="#4b90ee"/><stop offset="1" stop-color="#3a76d6"/></linearGradient></defs><circle cx="23" cy="23" r="20.200" fill="url(#pg)" stroke="#555" stroke-width="4.400"/><rect x="15.300" y="12.500" width="6" height="21" fill="#eef3fb"/><rect x="26.300" y="12.500" width="6" height="21" fill="#eef3fb"/></svg><div class="a" style="left:950.5px;top:226px;width:9px;height:732px;background:linear-gradient(90deg,#eceef2,#c3c8d6)"></div><div class="a" style="left:957px;top:958px;width:2.5px;height:46px;background:linear-gradient(90deg,#fff,#d5d8e0)"></div><div class="a" style="left:955px;top:0px;width:4px;height:226px;background:linear-gradient(90deg,rgba(110,120,130,0),rgba(110,120,130,0.350))"></div><div class="a" style="left:958.8px;top:0px;width:1.3px;height:1004px;background:#5a6270;"></div><div class="a" style="left:0px;top:0px;width:1.2px;height:1004px;background:#3c3f46;"></div>
</div>
<div id="R">
<div class="a" style="left:0px;top:0px;width:922px;height:28px;background:#b5e3f2;"></div><svg style="left:16px;top:3px;" width="16" height="15" viewBox="0 0 16 15"><polygon points="5.4,0.5 10.6,0.5 16,10 10.8,10" fill="#fbbc04"/><polygon points="5.4,0.5 0,10 2.7,14.5 8,5.2" fill="#1ea362"/><polygon points="2.7,14.5 13.3,14.5 16,10 5.3,10" fill="#4285f4"/><polygon points="10.8,10 16,10 13.3,14.5" fill="#ea4335"/></svg><span class="t" style="left:41px;top:4.4px;font-size:12.5px;color:#4d6973;width:25px;overflow:hidden;-webkit-mask-image:linear-gradient(90deg,#000 55%,transparent 100%);">1. G</span><svg style="left:73px;top:3px;" width="16" height="16" viewBox="0 0 16 16"><circle cx="8" cy="7" r="6.2" fill="#fbbc04"/><rect x="5.6" y="12.5" width="4.8" height="2.5" rx="1" fill="#f1f3f4"/><circle cx="8" cy="7" r="2.4" fill="#fde293"/></svg><span class="t" style="left:98px;top:4.4px;font-size:12.5px;color:#4d6973;width:25px;overflow:hidden;-webkit-mask-image:linear-gradient(90deg,#000 55%,transparent 100%);">Inte</span><svg style="left:130px;top:3px;" width="16" height="16" viewBox="0 0 16 16"><rect x="0" y="0" width="16" height="16" rx="2.5" fill="#b30b00"/><path d="M3 12.2c1.6-.6 3.3-3.6 4.2-6.4.5-1.6.4-2.8-.3-2.8-.8 0-.8 1.6.1 3.4 1.2 2.5 3.6 4.3 5.2 4.3 1.2 0 1.2-1.2-.3-1.3-2.3-.1-6 .9-8.2 2.2-1.3.8-1.4 1.1-.7.6z" fill="none" stroke="#fff" stroke-width="1.1"/></svg><span class="t" style="left:155px;top:4.4px;font-size:12.5px;color:#4d6973;width:25px;overflow:hidden;-webkit-mask-image:linear-gradient(90deg,#000 55%,transparent 100%);">1.3</span><svg style="left:187px;top:3px;" width="17" height="16" viewBox="0 0 17 16"><rect x="3" y="0.5" width="14" height="15" rx="1.5" fill="#0b8387"/><rect x="0" y="3.5" width="10" height="10" rx="1" fill="#036c70"/><text x="5" y="11.6" font-size="8" font-weight="700" fill="#fff" text-anchor="middle" font-family="Liberation Sans,sans-serif">F</text><rect x="11.5" y="4" width="4" height="1.6" fill="#9fdcdc"/><rect x="11.5" y="8" width="4" height="1.6" fill="#9fdcdc"/></svg><span class="t" style="left:212px;top:4.4px;font-size:12.5px;color:#4d6973;width:25px;overflow:hidden;-webkit-mask-image:linear-gradient(90deg,#000 55%,transparent 100%);">Op</span><svg style="left:244px;top:3px;" width="15" height="17" viewBox="0 0 15 17"><path d="M4.6 0.8 1.2 4.3c-.6 1.7-.5 4.6.4 6.8.5 1.2 1.6 1.6 3.2 1.7 1 .1 1.5-.3 1.6-1.1.7.5 1.6.6 2.3.7.9.1 1.1.6 1 1.6-.1.9-.6 1.1-1.7 1l.1 1.6c2.3.3 3.5-.5 4.1-2.4.8-2.8 1.2-7.5.2-10.7-.3-1-1.2-1.5-3.600-1.700C8 0.700 7.200 0.300 4.600 0.800z" fill="#1fb956"/><path d="M4.700 1.200v2.100c0 .7-.4 1.100-1.100 1.100H1.500" fill="none" stroke="#0d7a35" stroke-width=".9"/><circle cx="10.3" cy="6.300" r=".9" fill="#0d5e2a"/></svg><span class="t" style="left:269px;top:4.4px;font-size:12.5px;color:#4d6973;width:25px;overflow:hidden;-webkit-mask-image:linear-gradient(90deg,#000 55%,transparent 100%);">No</span><svg style="left:301px;top:3px;" width="17" height="16" viewBox="0 0 17 16"><rect width="17" height="16" fill="#000"/><text x="8.5" y="11.6" font-size="8.6" font-weight="700" fill="#fff" text-anchor="middle" font-family="Liberation Serif,serif">D2L</text></svg><span class="t" style="left:326px;top:4.4px;font-size:12.5px;color:#4d6973;width:25px;overflow:hidden;-webkit-mask-image:linear-gradient(90deg,#000 55%,transparent 100%);">Qu</span><svg style="left:415.5px;top:3px;" width="18" height="17" viewBox="0 0 18 17"><polygon points="0.5,2.800 17.500,0.300 17,14 1,16.600" fill="#000"/><text x="9" y="12.400" font-size="10.500" font-weight="700" fill="#fff" text-anchor="middle" font-family="Liberation Serif,serif">B</text></svg><span class="t" style="left:440.5px;top:4.4px;font-size:12.5px;color:#4d6973;width:25px;overflow:hidden;-webkit-mask-image:linear-gradient(90deg,#000 55%,transparent 100%);">Jac</span><svg style="left:472.5px;top:3px;" width="18" height="17" viewBox="0 0 18 17"><polygon points="0.5,2.800 17.500,0.300 17,14 1,16.600" fill="#000"/><text x="9" y="12.400" font-size="10.500" font-weight="700" fill="#fff" text-anchor="middle" font-family="Liberation Serif,serif">B</text></svg><span class="t" style="left:497.5px;top:4.4px;font-size:12.5px;color:#4d6973;width:25px;overflow:hidden;-webkit-mask-image:linear-gradient(90deg,#000 55%,transparent 100%);">1. E</span><svg style="left:529.5px;top:3px;" width="18" height="17" viewBox="0 0 18 17"><polygon points="0.5,2.800 17.500,0.300 17,14 1,16.600" fill="#000"/><text x="9" y="12.400" font-size="10.500" font-weight="700" fill="#fff" text-anchor="middle" font-family="Liberation Serif,serif">B</text></svg><span class="t" style="left:554.5px;top:4.4px;font-size:12.5px;color:#4d6973;width:25px;overflow:hidden;-webkit-mask-image:linear-gradient(90deg,#000 55%,transparent 100%);">Ebc</span><svg style="left:586.5px;top:3px;" width="18" height="17" viewBox="0 0 18 17"><polygon points="0.5,2.800 17.500,0.300 17,14 1,16.600" fill="#000"/><text x="9" y="12.400" font-size="10.500" font-weight="700" fill="#fff" text-anchor="middle" font-family="Liberation Serif,serif">B</text></svg><span class="t" style="left:611.5px;top:4.4px;font-size:12.5px;color:#4d6973;width:25px;overflow:hidden;-webkit-mask-image:linear-gradient(90deg,#000 55%,transparent 100%);">On</span><svg style="left:643px;top:3px;" width="15" height="16" viewBox="0 0 15 16"><path d="M1 1h7.500a5.500 5.500 0 0 1 0 11H6.500V15.500L1 15.500z" fill="#e8308a"/><path d="M1 1h4.500v14.500H1z" fill="#6a3de8"/><circle cx="8.300" cy="6.500" r="2.200" fill="#b5e3f2"/></svg><span class="t" style="left:668px;top:4.4px;font-size:12.5px;color:#4d6973;width:25px;overflow:hidden;-webkit-mask-image:linear-gradient(90deg,#000 55%,transparent 100%);">Bre</span><div class="a" style="left:65px;top:1px;width:1px;height:20px;background:#7aa0ac;"></div><div class="a" style="left:122px;top:1px;width:1px;height:20px;background:#7aa0ac;"></div><div class="a" style="left:179px;top:1px;width:1px;height:20px;background:#7aa0ac;"></div><div class="a" style="left:236px;top:1px;width:1px;height:20px;background:#7aa0ac;"></div><div class="a" style="left:293px;top:1px;width:1px;height:20px;background:#7aa0ac;"></div><div class="a" style="left:464.5px;top:1px;width:1px;height:20px;background:#7aa0ac;"></div><div class="a" style="left:521.5px;top:1px;width:1px;height:20px;background:#7aa0ac;"></div><div class="a" style="left:578.5px;top:1px;width:1px;height:20px;background:#7aa0ac;"></div><div class="a" style="left:635px;top:1px;width:1px;height:20px;background:#7aa0ac;"></div><div class="a" style="left:691px;top:1px;width:1px;height:20px;background:#7aa0ac;"></div><div class="a" style="left:349px;top:0;width:62px;height:28px;background:#fff;border-radius:8px 8px 0 0"></div><svg style="left:341px;top:20px;" width="8" height="8" viewBox="0 0 8 8"><path d="M0 8A8 8 0 0 0 8 0V8z" fill="#fff"/></svg><svg style="left:411px;top:20px;" width="8" height="8" viewBox="0 0 8 8"><path d="M8 8A8 8 0 0 1 0 0V8z" fill="#fff"/></svg><svg style="left:359px;top:2px;" width="18" height="17" viewBox="0 0 18 17"><polygon points="0.5,2.800 17.500,0.300 17,14 1,16.600" fill="#000"/><text x="9" y="12.400" font-size="10.500" font-weight="700" fill="#fff" text-anchor="middle" font-family="Liberation Serif,serif">B</text></svg><svg style="left:388px;top:6px;" width="10" height="10" viewBox="0 0 10 10"><path d="M1 1l8 8M9 1l-8 8" stroke="#202124" stroke-width="1.700"/></svg><svg style="left:706px;top:3px;" width="14" height="14" viewBox="0 0 14 14"><path d="M7 1v12M1 7h12" stroke="#202124" stroke-width="1.800"/></svg><svg style="left:794px;top:-4px;" width="12" height="8" viewBox="0 0 12 8"><path d="M1 1l5 5 5-5" fill="none" stroke="#7aa5b3" stroke-width="1.200"/></svg><div class="a" style="left:838px;top:0px;width:12px;height:1px;background:#5d8795;"></div><div class="a" style="left:887px;top:-6px;width:10px;height:10px;border:1px solid #5d8795"></div><svg style="left:14px;top:38px;" width="16" height="16" viewBox="0 0 16 16"><path d="M15 8H2M8 1.800 1.800 8 8 14.200" fill="none" stroke="#9aa0a6" stroke-width="1.900"/></svg><svg style="left:46px;top:38px;" width="16" height="16" viewBox="0 0 16 16"><path d="M1 8h13M8 1.800 14.200 8 8 14.200" fill="none" stroke="#9aa0a6" stroke-width="1.900"/></svg><svg style="left:78px;top:37px;" width="16" height="16" viewBox="0 0 16 16"><path d="M13.600 5.200A6.200 6.200 0 1 0 14.200 9.500" fill="none" stroke="#202124" stroke-width="2"/><polygon points="15.200,0.800 15.200,7 9,7" fill="#202124"/></svg><div class="a" style="left:109px;top:32px;width:305px;height:27.500px;border-radius:14px;background:#e7e8eb"></div><svg style="left:122px;top:39px;" width="10" height="13" viewBox="0 0 10 13"><rect x="0" y="5" width="10" height="8" rx="1.200" fill="#5f6368"/><path d="M2.300 5.500V3.600a2.700 2.700 0 0 1 5.400 0V5.500" fill="none" stroke="#5f6368" stroke-width="1.500"/></svg><span class="t" style="left:142.5px;top:39.3px;font-size:14px;color:#202124;letter-spacing:0.223px;">brainly.com</span><span class="t" style="left:215.5px;top:39.3px;font-size:14px;color:#70757a;letter-spacing:-0.070px;">/question/5873462...</span><svg style="left:357px;top:39px;" width="16" height="15" viewBox="0 0 16 15"><path d="M6 3.500H1.200V14h12V10.500" fill="none" stroke="#5f6368" stroke-width="1.300"/><path d="M4.500 10.500c.6-3.300 2.700-5 6.200-5.200V2.500L15 6.300l-4.300 3.800V7.500c-2.700 0-4.600.9-6.200 3z" fill="none" stroke="#5f6368" stroke-width="1.200" stroke-linejoin="round"/></svg><svg style="left:390px;top:38px;" width="16" height="16" viewBox="0 0 16 16"><polygon points="8,1.300 10,6.100 15.200,6.500 11.300,9.900 12.500,15 8,12.300 3.500,15 4.700,9.900 0.800,6.500 6,6.100" fill="none" stroke="#5f6368" stroke-width="1.400" stroke-linejoin="round"/></svg><svg style="left:426.99px;top:37.99px;" width="16.02" height="16.02" viewBox="0 0 18 18"><path d="M1.500 16.500C5 10 10 4 16.500 1.500 15 8 10 12.500 4 14.500z" fill="#8a55d8"/><path d="M1 17 9 9" stroke="#5b2fb0" stroke-width="1.200"/></svg><svg style="left:458.99px;top:37.99px;" width="16.02" height="16.02" viewBox="0 0 18 18"><circle cx="9" cy="9" r="8.500" fill="#7a28c9"/><text x="9" y="13.300" font-size="12.500" font-weight="700" fill="#fff" text-anchor="middle" font-family="Liberation Sans,sans-serif">k</text></svg><svg style="left:492.32px;top:37.32px;" width="21.36" height="21.36" viewBox="0 0 24 24"><line x1="8" y1="8" x2="15.50" y2="8.00" stroke="#7048e8" stroke-width="2.100" stroke-linecap="round"/><line x1="8" y1="8" x2="13.30" y2="13.30" stroke="#7048e8" stroke-width="2.100" stroke-linecap="round"/><line x1="8" y1="8" x2="8.00" y2="15.50" stroke="#7048e8" stroke-width="2.100" stroke-linecap="round"/><line x1="8" y1="8" x2="2.70" y2="13.30" stroke="#7048e8" stroke-width="2.100" stroke-linecap="round"/><line x1="8" y1="8" x2="0.50" y2="8.00" stroke="#7048e8" stroke-width="2.100" stroke-linecap="round"/><line x1="8" y1="8" x2="2.70" y2="2.70" stroke="#7048e8" stroke-width="2.100" stroke-linecap="round"/><line x1="8" y1="8" x2="8.00" y2="0.50" stroke="#7048e8" stroke-width="2.100" stroke-linecap="round"/><line x1="8" y1="8" x2="13.30" y2="2.70" stroke="#7048e8" stroke-width="2.100" stroke-linecap="round"/><circle cx="8" cy="8" r="3.200" fill="#fff" stroke="#7048e8" stroke-width="1.600"/><rect x="11.500" y="11.500" width="11" height="11" rx="2" fill="#f0583a"/><text x="17" y="20.600" font-size="9.500" font-weight="700" fill="#3a1a10" text-anchor="middle" font-family="Liberation Sans,sans-serif">5</text></svg><svg style="left:523.99px;top:37.99px;" width="16.02" height="16.02" viewBox="0 0 18 18"><path d="M2.500 1h13a1.500 1.500 0 0 1 1.500 1.500v10a1.500 1.500 0 0 1-1.500 1.500H12l-3 3-3-3H2.500A1.500 1.500 0 0 1 1 12.500v-10A1.500 1.500 0 0 1 2.500 1z" fill="#d7f3e6" stroke="#2bb673" stroke-width="1.800"/><circle cx="6.500" cy="6" r="1.100" fill="#2bb673"/><circle cx="11.500" cy="6" r="1.100" fill="#2bb673"/><path d="M6 9.200c1.700 1.700 4.300 1.700 6 0" fill="none" stroke="#2bb673" stroke-width="1.300"/></svg><svg style="left:555.99px;top:37.99px;" width="16.02" height="16.02" viewBox="0 0 18 18"><rect width="18" height="18" rx="5" fill="#4a8cff"/><rect x="3.500" y="6" width="7.500" height="6" rx="1.300" fill="#fff"/><polygon points="11.800,8 14.800,6.200 14.800,11.800 11.800,10" fill="#fff"/></svg><svg style="left:587.99px;top:37.99px;" width="16.02" height="16.02" viewBox="0 0 18 18"><rect width="18" height="18" rx="2.500" fill="#0b0b0d"/><path d="M5 3.500h5.500L13.500 6.500V14.500H5z" fill="none" stroke="#3ddc84" stroke-width="1.300"/><path d="M5 14.500V3.500" stroke="#e83e8c" stroke-width="1.300"/><path d="M10.500 3.500v3h3" fill="none" stroke="#4aa3ff" stroke-width="1.200"/></svg><svg style="left:619.99px;top:37.99px;" width="16.02" height="16.02" viewBox="0 0 18 18"><circle cx="9" cy="9" r="6.300" fill="none" stroke="#16307a" stroke-width="4.200"/></svg><svg style="left:652.88px;top:37.99px;" width="14.24" height="16.02" viewBox="0 0 16 18"><polygon points="1,1 15,1 15,4.500 7,13.500 15,13.500 15,17 1,17 1,13.500 9,4.500 1,4.500" fill="#757b82"/></svg><svg style="left:683.99px;top:37.99px;" width="16.02" height="16.02" viewBox="0 0 16 16"><rect x="0" y="0" width="16" height="16" rx="2.5" fill="#b30b00"/><path d="M3 12.2c1.6-.6 3.3-3.6 4.2-6.4.5-1.6.4-2.8-.3-2.8-.8 0-.8 1.6.1 3.4 1.2 2.5 3.6 4.3 5.2 4.3 1.2 0 1.2-1.2-.3-1.3-2.3-.1-6 .9-8.2 2.2-1.3.8-1.4 1.1-.7.6z" fill="none" stroke="#fff" stroke-width="1.1"/></svg><svg style="left:716.88px;top:37.99px;" width="14.24" height="16.02" viewBox="0 0 16 18"><path d="M6 1c3-1 6 1 6.500 3.500 1.500.5 2.500 2.500 1.500 4-1 1.500-3 1.200-3.500 2.500-.5 1.500-1 4-2.500 5.500-1.500 1-2.500-.5-2-2 .5-2 1.500-3 .5-4.500C5 8 1.500 8.500 1.500 5.500 1.500 3 3.500 1.500 6 1z" fill="#f7b500" stroke="#c98a00" stroke-width=".8"/><circle cx="8" cy="5" r="1.800" fill="#fbe08a"/></svg><svg style="left:747.99px;top:37.99px;" width="16.02" height="16.02" viewBox="0 0 18 18"><path d="M7.500 1a1.900 1.900 0 0 1 1.900 1.900V4h3.800A1.300 1.300 0 0 1 14.500 5.300V8.500h1.100a1.900 1.900 0 0 1 0 3.800H14.500v3.400a1.300 1.300 0 0 1-1.300 1.300H9.800v-1.100a2 2 0 0 0-4 0V17H2.300A1.300 1.300 0 0 1 1 15.700V12.300h1.100a2 2 0 0 0 0-4H1V5.300A1.300 1.300 0 0 1 2.300 4h3.300V2.900A1.900 1.900 0 0 1 7.500 1z" fill="#202124"/></svg><svg style="left:780.88px;top:40.77px;" width="14.24" height="12.46" viewBox="0 0 18 16"><rect x="0" y="1" width="12.500" height="2" fill="#202124"/><rect x="0" y="5.500" width="12.500" height="2" fill="#202124"/><rect x="0" y="10" width="7.500" height="2" fill="#202124"/><rect x="14.500" y="1" width="2" height="11" fill="#202124"/><rect x="14.500" y="1" width="3.500" height="2" fill="#202124"/><circle cx="13.300" cy="12.500" r="2.700" fill="#202124"/></svg><svg style="left:813.77px;top:39.77px;" width="12.46" height="12.46" viewBox="0 0 14 14"><rect x="1" y="1" width="12" height="11.500" fill="#fff" stroke="#202124" stroke-width="2"/><rect x="8" y="1" width="5" height="11.500" fill="#202124"/></svg><svg style="left:843.10px;top:37.10px;" width="17.80" height="17.80" viewBox="0 0 20 20"><circle cx="10" cy="10" r="10" fill="#fbe9e7"/><path d="M2 5 7 9M18 5 13 9" stroke="#c62828" stroke-width="1.600"/><circle cx="10" cy="7" r="3.200" fill="#8d6e63"/><rect x="7" y="10" width="6" height="6" fill="#3e2723"/><path d="M2.500 15c4 3 11 3 15 0l-1 3.500c-4 2-9 2-13 0z" fill="#c62828"/></svg><div class="a" style="left:871px;top:32px;width:82px;height:28px;border:1.300px solid #3f6f4e;border-radius:14.0px;background:#e9f3eb"></div><span class="t" style="left:884px;top:40.2px;font-size:13px;color:#2d6a43;letter-spacing:-0.487px;">Update</span><svg style="left:16px;top:69.0px;" width="14" height="17" viewBox="0 0 14 17"><polygon points="0,0.500 14,0.500 12.800,5 11.500,5 13.200,14.500 9.800,17 4.200,17 0.800,14.500 2.500,5 1.200,5" fill="#c8321f"/><text x="7" y="12.3" font-size="10.5" font-weight="700" fill="#fff" text-anchor="middle" font-family="Liberation Sans,sans-serif">K</text></svg><span class="t" style="left:38px;top:71.8px;font-size:12px;color:#3c4043;letter-spacing:-0.611px;">TEACHER Dashboard</span><svg style="left:163px;top:69.5px;" width="18" height="16" viewBox="0 0 18 16"><rect x="1" y="8" width="16" height="7" rx="1" fill="#f3b33d"/><text x="9" y="14" font-size="7.500" font-weight="700" fill="#2b4c9b" text-anchor="middle" font-family="Liberation Sans,sans-serif">ngpf</text><polygon points="9,0.500 17,3.500 9,6.500 1,3.500" fill="#2b4c9b"/><rect x="5" y="5" width="8" height="3" fill="#2b4c9b"/></svg><span class="t" style="left:189px;top:71.8px;font-size:12px;color:#3c4043;letter-spacing:-0.270px;">Next Gen Personal...</span><svg style="left:311px;top:69.5px;" width="16" height="16" viewBox="0 0 16 16"><circle cx="8" cy="8" r="7" fill="#e3f4fb" stroke="#9cc9e0" stroke-width="1.2"/><circle cx="8" cy="8" r="2.3" fill="#8fc3df"/></svg><span class="t" style="left:336px;top:71.8px;font-size:12px;color:#3c4043;letter-spacing:-0.068px;">Screencast-O-Matic -</span><svg style="left:464px;top:70.5px;" width="18" height="15" viewBox="0 0 18 15"><polygon points="3,0 9,1.500 7,13 1,11.500" fill="#8cb52b"/><polygon points="8,6 15,7 14.500,14 7.500,13" fill="#17324d"/></svg><span class="t" style="left:489px;top:71.8px;font-size:12px;color:#3c4043;letter-spacing:-0.125px;">Web Widget Live C...</span><svg style="left:615px;top:70.5px;" width="18" height="14" viewBox="0 0 18 14"><polygon points="7,1 13,7 7,13 1,7" fill="#1c4f9c"/><polygon points="7,4.500 9.500,7 7,9.500 4.500,7" fill="#fff"/><polygon points="14,0 17,3 14,6 11,3" fill="#1c4f9c"/></svg><span class="t" style="left:640px;top:71.8px;font-size:12px;color:#3c4043;letter-spacing:-0.170px;">Percipio</span><svg style="left:699px;top:68.5px;" width="15" height="17" viewBox="0 0 15 17"><path d="M4.6 0.8 1.2 4.3c-.6 1.7-.5 4.6.4 6.8.5 1.2 1.6 1.6 3.2 1.7 1 .1 1.5-.3 1.6-1.1.7.5 1.6.6 2.3.7.9.1 1.1.6 1 1.6-.1.9-.6 1.1-1.7 1l.1 1.6c2.3.3 3.5-.5 4.1-2.4.8-2.8 1.2-7.5.2-10.7-.3-1-1.2-1.5-3.600-1.700C8 0.700 7.200 0.300 4.600 0.800z" fill="#1fb956"/><path d="M4.700 1.200v2.100c0 .7-.4 1.100-1.100 1.100H1.500" fill="none" stroke="#0d7a35" stroke-width=".9"/><circle cx="10.3" cy="6.300" r=".9" fill="#0d5e2a"/></svg><span class="t" style="left:722px;top:71.8px;font-size:12px;color:#3c4043;">Notes - Evernote</span><div class="a" style="left:0px;top:95px;width:922px;height:1px;background:#dadce0;"></div><div class="a" style="left:20px;top:117px;width:64px;height:32px;"><svg style="left:0;top:0" width="64" height="32" viewBox="0 0 64 32"><polygon points="1,10.500 63,0.300 63,17.300 1,27.500" fill="#000"/><polygon points="38.500,25 63,18.500 63,27 38.500,31.200" fill="#57cf98"/><text transform="translate(4.300,24) rotate(-9.300) skewX(-10)" font-size="13.400" font-weight="700" fill="#fff" stroke="#fff" stroke-width="0.700" font-family="Liberation Sans,sans-serif" textLength="56" lengthAdjust="spacingAndGlyphs">BRAINLY</text><text transform="translate(40.300,30.200) rotate(-9.300) skewX(-10)" font-size="6.800" font-weight="700" fill="#fff" stroke="#fff" stroke-width="0.300" font-family="Liberation Sans,sans-serif" textLength="21" lengthAdjust="spacingAndGlyphs">PLUS</text></svg></div><div class="a" style="left:104px;top:112.500px;width:738px;height:40.500px;border-radius:20.500px;background:#ebf2f7"></div><span class="t" style="left:122px;top:126.1px;font-size:15.5px;color:#687b8c;letter-spacing:0.034px;">Search for an answer to any question...</span><svg style="left:817px;top:126px;" width="13" height="13" viewBox="0 0 13 13"><circle cx="5" cy="5" r="4" fill="none" stroke="#687b8c" stroke-width="1.400"/><path d="M8 8l4 4" stroke="#687b8c" stroke-width="1.600"/></svg><svg style="left:855px;top:123px;" width="17" height="20" viewBox="0 0 17 20"><path d="M8.500 1C5 1 3 4 3 7.500V12L0.500 15.500V16.500H16.500V15.500L14 12V7.500C14 4 12 1 8.500 1z" fill="#000"/><rect x="6" y="17.800" width="5" height="1.800" rx="0.900" fill="#000"/></svg><svg style="left:895.5px;top:120.5px;" width="24" height="24" viewBox="0 0 24 24"><circle cx="12" cy="12" r="12" fill="#687b8c"/><circle cx="12" cy="9" r="4" fill="#c3d1dd"/><path d="M4 19.500c1.500-4 4.500-5 8-5s6.500 1 8 5c-2 2.500-5 3.500-8 3.500s-6-1-8-3.500z" fill="#c3d1dd"/></svg><span class="t" style="left:112.5px;top:172.5px;font-size:14.2px;color:#111;letter-spacing:0.195px;">For students</span><span class="t" style="left:210.5px;top:172.5px;font-size:14.2px;color:#111;letter-spacing:0.178px;">For parents</span><span class="t" style="left:302px;top:172.5px;font-size:14.2px;color:#111;letter-spacing:0.384px;">Textbook Solutions</span><span class="t" style="left:444px;top:172.5px;font-size:14.2px;color:#111;letter-spacing:0.197px;">For teachers</span><span class="t" style="left:543px;top:172.5px;font-size:14.2px;color:#111;letter-spacing:0.364px;">Honor code</span><span class="t" style="left:637px;top:172.5px;font-size:14.2px;color:#111;letter-spacing:0.293px;">Brainly App</span><span class="t" style="left:728.7px;top:172.5px;font-size:14.2px;color:#111;letter-spacing:0.243px;">Brainly Tutor</span><div class="a" style="left:0px;top:207px;width:922px;height:1.5px;background:#e8ebee;"></div><div class="a" style="left:142.5px;top:208.5px;width:2px;height:677px;background:#60d399;"></div><div class="a" style="left:800px;top:208.5px;width:2px;height:677px;background:#60d399;"></div><div class="a" style="left:170px;top:208.500px;width:29px;height:9px;overflow:hidden"><div class="a" style="left:0;top:-20px;width:29px;height:29px;border-radius:50%;background:#0b0b0b"></div></div><span class="t" style="left:216px;top:208.5px;font-size:12px;color:#687b8c;letter-spacing:0.087px;">Virtuoso • <b style="color:#46535f">1K</b> answers • <b style="color:#46535f">2.6M</b> people helped</span><span class="t" style="left:167.5px;top:251.2px;font-size:17px;color:#000;font-weight:700;letter-spacing:-0.154px;">Answer:</span><span class="t" style="left:167.5px;top:282.7px;font-size:17.6px;color:#262626;letter-spacing:-0.324px;">a). Linear equation; y=1.25 x+12.5</span><span class="t" style="left:167.5px;top:314.7px;font-size:17.6px;color:#262626;letter-spacing:-0.018px;">b). The variable are x and y, where;</span><span class="t" style="left:167.5px;top:346.7px;font-size:17.6px;color:#262626;letter-spacing:0.066px;">y is the total cost at the county fair</span><span class="t" style="left:167.5px;top:378.7px;font-size:17.6px;color:#262626;letter-spacing:0.110px;">x is the number of tickets per ride</span><span class="t" style="left:167.5px;top:411.2px;font-size:17px;color:#000;font-weight:700;letter-spacing:0.007px;">Step-by-step explanation:</span><span class="t" style="left:167.5px;top:442.7px;font-size:17.6px;color:#262626;letter-spacing:-0.027px;">Step 1: Define variable in the linear equation</span><span class="t" style="left:167.5px;top:474.7px;font-size:17.6px;color:#262626;letter-spacing:-0.435px;">y=mx+c</span><span class="t" style="left:167.5px;top:506.7px;font-size:17.6px;color:#262626;letter-spacing:0.198px;">where;</span><span class="t" style="left:167.5px;top:538.7px;font-size:17.6px;color:#262626;letter-spacing:0.038px;">y=The total cost at the county fair</span><span class="t" style="left:167.5px;top:570.7px;font-size:17.6px;color:#262626;letter-spacing:0.096px;">x=the number of tickets per ride</span><span class="t" style="left:167.5px;top:602.7px;font-size:17.6px;color:#262626;letter-spacing:0.063px;">m=Cost per ticket ride</span><span class="t" style="left:167.5px;top:634.7px;font-size:17.6px;color:#262626;letter-spacing:-0.045px;">c= fair admission price</span><span class="t" style="left:167.5px;top:666.7px;font-size:17.6px;color:#262626;letter-spacing:0.050px;">Step 2: Derive linear equation</span><span class="t" style="left:167.5px;top:698.7px;font-size:17.6px;color:#262626;letter-spacing:-0.105px;">In or case;</span><span class="t" style="left:167.5px;top:730.7px;font-size:17.6px;color:#262626;letter-spacing:-0.111px;">y=$43.75</span><span class="t" style="left:167.5px;top:762.7px;font-size:17.6px;color:#262626;letter-spacing:-0.020px;">m=$1.25 per ticket ride</span><span class="t" style="left:167.5px;top:794.7px;font-size:17.6px;color:#262626;letter-spacing:0.092px;">x=25 tickets</span><span class="t" style="left:167.5px;top:826.7px;font-size:17.6px;color:#262626;letter-spacing:0.022px;">c=unknown</span><span class="t" style="left:167.5px;top:858.7px;font-size:17.6px;color:#262626;letter-spacing:0.070px;">replacing;</span><div class="a" style="left:0px;top:885px;width:922px;height:119px;background:#fdf0d6;"></div><svg style="left:24px;top:909.7px;" width="56" height="56" viewBox="0 0 56 56"><circle cx="28" cy="28" r="27.900" fill="#000"/><text transform="translate(14.500,43.300) rotate(-5) skewX(-4)" font-size="43" font-weight="700" fill="#fff" font-family="Liberation Serif,serif" stroke="#fff" stroke-width="2.400" stroke-linejoin="round" textLength="27" lengthAdjust="spacingAndGlyphs">B</text></svg><svg style="left:94px;top:909.7px;" width="56" height="56" viewBox="0 0 56 56"><circle cx="28" cy="28" r="27.900" fill="#f9b916"/><circle cx="28" cy="28" r="25" fill="none" stroke="#fbd05a" stroke-width="1"/><g transform="translate(28.500,28) rotate(44)"><path d="M0 -20c5.500 4.500 7.500 12 6.500 20l4.500 6v5.500l-6.500-3.500h-9l-6.500 3.500v-5.500l4.500-6c-1-8 1-15.500 6.500-20z" fill="#26263a"/><circle cx="0" cy="-7.500" r="2.700" fill="#f9b916"/><ellipse cx="0" cy="12.500" rx="3.200" ry="4" fill="#fff3c4"/></g></svg><span class="t" style="left:174px;top:910.6px;font-size:22.3px;color:#000;font-weight:700;-webkit-text-stroke:0.900px #000;letter-spacing:0.625px;">INCREDIBLE 1:1 LIVE MATH TUTORING FOR</span><span class="t" style="left:174px;top:934.6px;font-size:22.3px;color:#000;font-weight:700;-webkit-text-stroke:0.900px #000;letter-spacing:0.925px;">YOUR CHILD</span><span class="t" style="left:174px;top:967.7px;font-size:14.5px;color:#2b2b2b;letter-spacing:0.157px;">Empower them to master basics, get homework help and more with</span><span class="t" style="left:620.8px;top:967.7px;font-size:14.5px;color:#111;font-weight:700;letter-spacing:-0.029px;">Cuemath, the</span><span class="t" style="left:174px;top:987.7px;font-size:14.5px;color:#111;font-weight:700;letter-spacing:-0.212px;">world&#x27;s leading platform for live 1:1 math tutoring.</span><div class="a" style="left:782.5px;top:938.800px;width:137px;height:40px;border-radius:20px;background:#000"></div><span class="t" style="left:802.5px;top:953.5px;font-size:14.5px;color:#fff;font-weight:700;letter-spacing:-0.430px;">GET STARTED</span>
</div>
</body></html>
